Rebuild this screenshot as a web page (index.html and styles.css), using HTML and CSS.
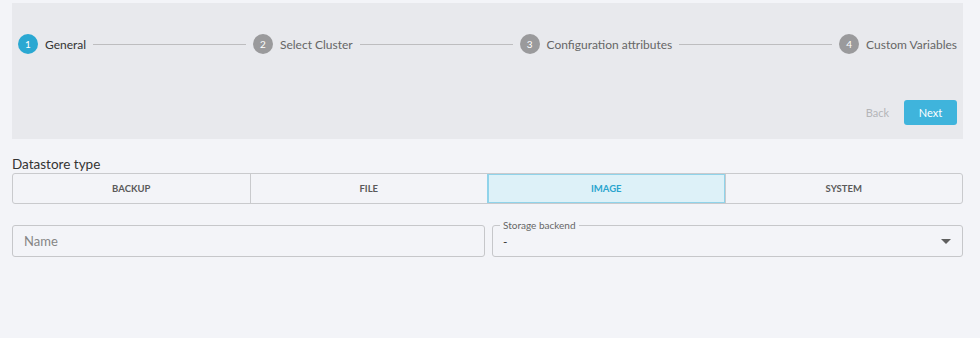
FILE: index.html
```html
<!DOCTYPE html>
<html lang="en">
<head>
<meta charset="utf-8">
<title>Create Datastore</title>
<link rel="stylesheet" href="styles.css">
</head>
<body>
<div class="page">
  <section class="wizard">
    <ol class="stepper">
      <li class="step active"><span class="num">1</span><span class="label">General</span></li>
      <li class="connector"></li>
      <li class="step"><span class="num">2</span><span class="label">Select Cluster</span></li>
      <li class="connector"></li>
      <li class="step"><span class="num">3</span><span class="label">Configuration attributes</span></li>
      <li class="connector"></li>
      <li class="step"><span class="num">4</span><span class="label">Custom Variables</span></li>
    </ol>
    <div class="actions">
      <button class="btn-back" disabled>Back</button>
      <button class="btn-next">Next</button>
    </div>
  </section>

  <div class="field-title">Datastore type</div>
  <div class="toggle-group">
    <button class="toggle">BACKUP</button>
    <button class="toggle">FILE</button>
    <button class="toggle selected">IMAGE</button>
    <button class="toggle">SYSTEM</button>
  </div>

  <div class="inputs">
    <div class="text-input"><span class="placeholder">Name</span></div>
    <fieldset class="select">
      <legend>Storage backend</legend>
      <span class="value">-</span>
      <svg class="caret" width="10" height="5" viewBox="0 0 10 5"><path d="M0 0 L10 0 L5 5 Z" fill="#5f5f5f"/></svg>
    </fieldset>
  </div>
</div>
</body>
</html>
```

FILE: styles.css
```css
* { box-sizing: border-box; }
html, body { margin: 0; padding: 0; }
body {
  background: #f3f4f8;
  font-family: "Lato", "Open Sans", sans-serif;
  color: #333;
  width: 980px;
  height: 338px;
  overflow: hidden;
}
.page {
  padding: 3px 17px 0 12px;
}
.wizard {
  background: #e8e9ed;
  height: 136px;
  padding: 31px 6px 14px 6px;
  display: flex;
  flex-direction: column;
}
.stepper {
  list-style: none;
  margin: 0;
  padding: 0;
  display: flex;
  align-items: center;
  height: 20px;
}
.step {
  display: flex;
  align-items: center;
  gap: 7px;
  flex: none;
}
.num {
  width: 20px;
  height: 20px;
  border-radius: 50%;
  background: #9a9a9c;
  color: #fff;
  font-size: 10px;
  display: flex;
  align-items: center;
  justify-content: center;
}
.step.active .num { background: #2aa8d2; }
.label {
  font-size: 12px;
  color: #666;
  white-space: nowrap;
}
.step.active .label { color: #333; }
.connector {
  flex: 1;
  height: 1px;
  background: #bdbdbf;
  margin: 0 7px;
}
.actions {
  margin-top: auto;
  display: flex;
  justify-content: flex-end;
  align-items: center;
  gap: 15px;
}
button {
  font-family: inherit;
}
.btn-back {
  border: 0;
  background: transparent;
  color: #b4b5b8;
  font-size: 11px;
  padding: 0;
  height: 25px;
}
.btn-next {
  border: 0;
  background: #3fb4dc;
  color: #fff;
  font-size: 11px;
  width: 53px;
  height: 25px;
  border-radius: 3px;
  padding: 0;
}
.field-title {
  margin-top: 16px;
  font-size: 13.5px;
  line-height: 18px;
  color: #333;
}
.toggle-group {
  display: flex;
  height: 31px;
  border: 1px solid #c9cacd;
  border-radius: 3px;
  overflow: hidden;
}
.toggle {
  flex: 1;
  border: 0;
  border-left: 1px solid #c9cacd;
  background: transparent;
  color: #5a5a5a;
  font-size: 9.5px;
  font-weight: 700;
  padding: 0;
}
.toggle:first-child { border-left: 0; }
.toggle.selected {
  background: #ddf1f8;
  color: #2aa5cf;
  box-shadow: inset 0 0 0 1px #90d3ea;
  border-left-color: #90d3ea;
}
.inputs {
  margin-top: 21px;
  display: flex;
  align-items: flex-start;
  gap: 7px;
}
.text-input {
  flex: 1;
  height: 32px;
  border: 1px solid #c6c7ca;
  border-radius: 3px;
  display: flex;
  align-items: center;
  padding: 0 11px;
}
.placeholder {
  font-size: 13px;
  color: #858585;
}
.select {
  flex: 1;
  margin: -5px 0 0 0;
  height: 37px;
  border: 1px solid #c6c7ca;
  border-radius: 3px;
  padding: 0 10px 0 10px;
  display: flex;
  align-items: center;
  min-width: 0;
}
.select legend {
  font-size: 10px;
  color: #666;
  padding: 0 3px;
  margin-left: -3px;
  line-height: 10px;
}
.value {
  font-size: 12px;
  color: #333;
  flex: 1;
  margin-top: -4px;
}
.caret {
  margin-top: -4px;
  margin-right: 1px;
}
```
